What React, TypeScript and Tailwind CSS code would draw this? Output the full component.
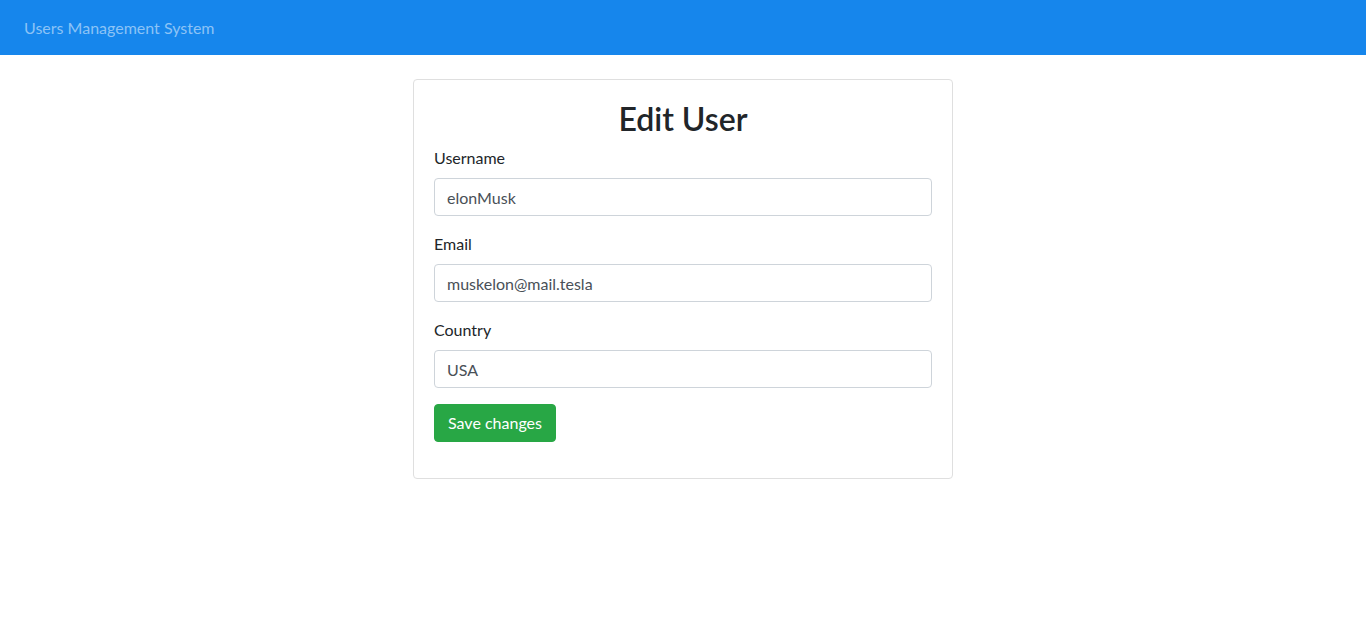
import React from "react";

const font = "font-['Segoe_UI','Lato','Noto_Sans',sans-serif]";

function Field({ label, value }: { label: string; value: string }) {
  return (
    <div className="mb-4">
      <label className="block mb-2 text-[16px] leading-6 text-[#212529]">{label}</label>
      <input
        defaultValue={value}
        className="block w-full h-[38px] px-3 py-[6px] text-[16px] leading-6 text-[#495057] bg-white border border-[#ced4da] rounded-[4px] outline-none"
      />
    </div>
  );
}

export default function App() {
  return (
    <div className={`${font} min-h-screen bg-white`}>
      <nav className="h-[55px] bg-[#1686ec] flex items-center px-6">
        <span className="text-[16px] text-[#8cc3f6]">Users Management System</span>
      </nav>
      <div className="flex justify-center mt-6">
        <div className="w-[540px] border border-[#dfdfdf] rounded-[4px] p-5">
          <h1 className="text-center text-[32px] leading-[38.4px] font-semibold text-[#212529] mb-2">Edit User</h1>
          <Field label="Username" value="elonMusk" />
          <Field label="Email" value="muskelon@mail.tesla" />
          <Field label="Country" value="USA" />
          <button className="mb-4 h-[38px] px-[13px] text-[16px] leading-6 text-white bg-[#28a745] rounded-[4px] border border-[#28a745]">
            Save changes
          </button>
        </div>
      </div>
    </div>
  );
}
